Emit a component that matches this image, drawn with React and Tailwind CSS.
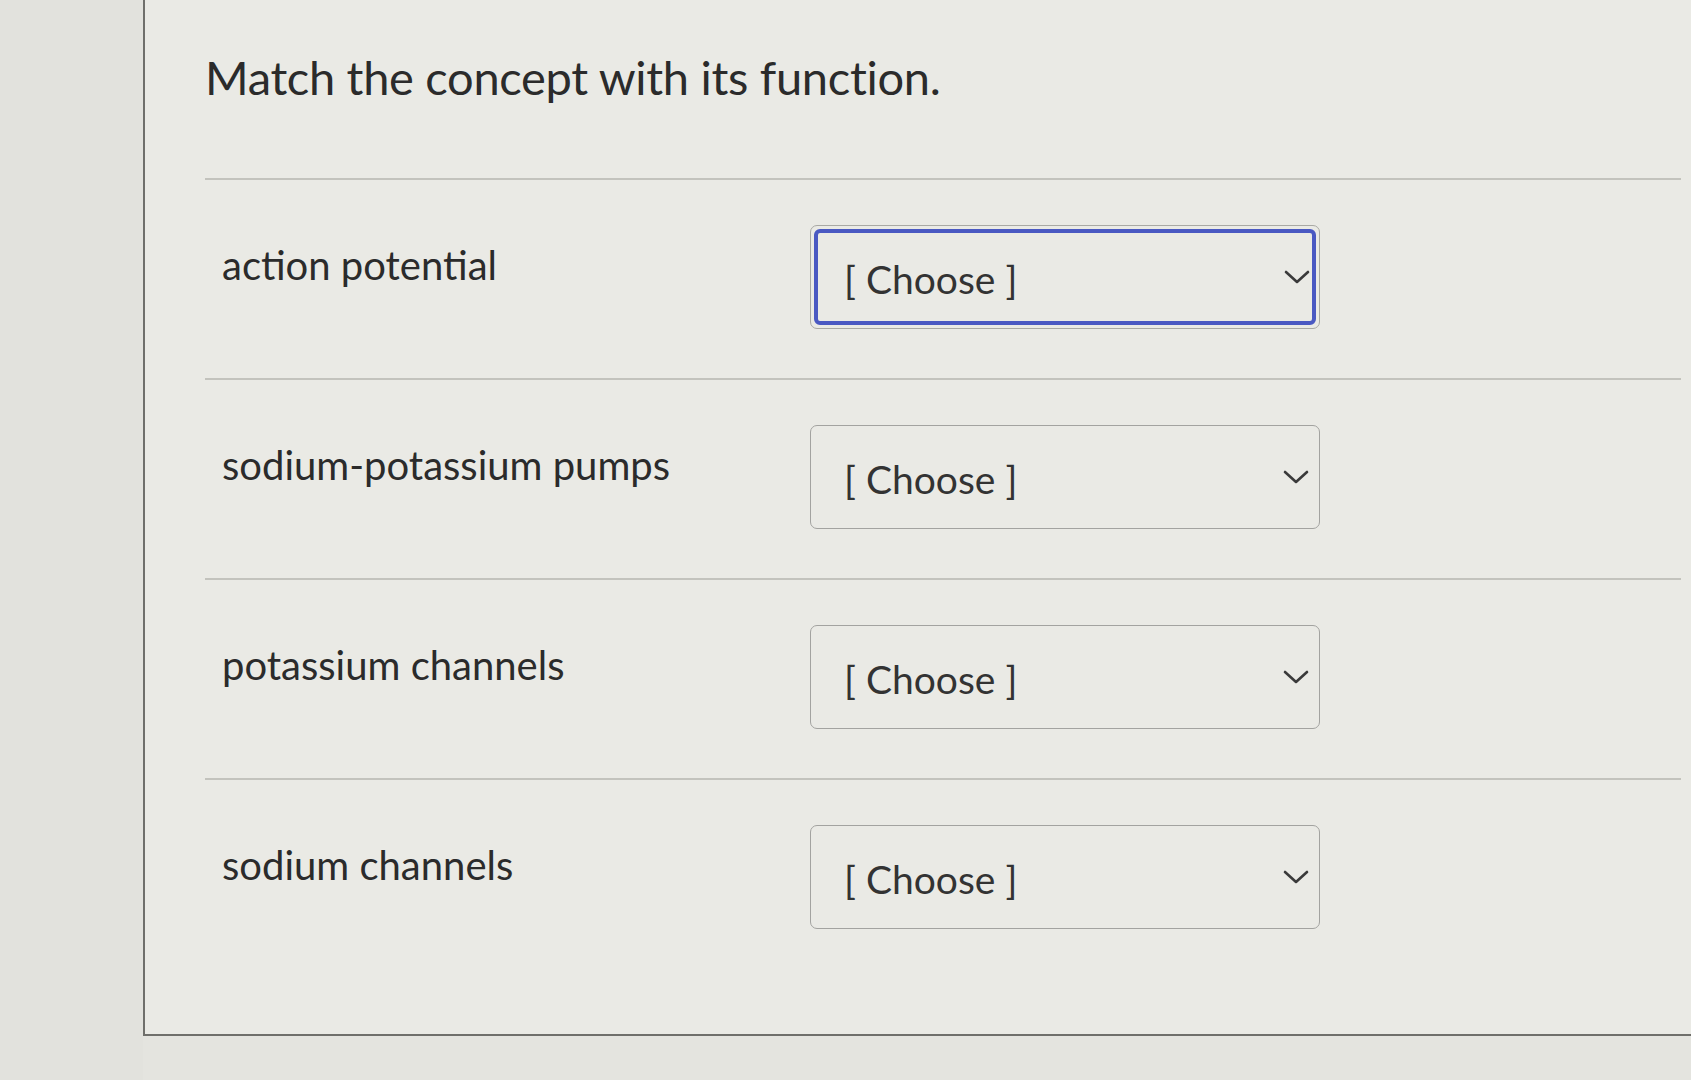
import React from 'react';

const rows = ['action potential', 'sodium-potassium pumps', 'potassium channels', 'sodium channels'];

const Chevron = () => (
  <svg width="26" height="16" viewBox="0 0 26 16" fill="none" className="shrink-0">
    <path d="M2 3 L13 13 L24 3" stroke="#3a3a3a" strokeWidth="2.6" strokeLinecap="round" strokeLinejoin="round" />
  </svg>
);

const Select = ({ focused }) => {
  if (focused) {
    return (
      <div className="w-[510px] h-[104px] rounded-[7px] border border-[#a9a9a4] p-[3px] shrink-0">
        <div className="h-full rounded-[6px] border-[4px] border-[#4a59c2] flex items-center justify-between pl-[26px] pr-[2px]">
          <span className="text-[39px] text-[#333] leading-none mt-[4px]">[ Choose ]</span>
          <Chevron />
        </div>
      </div>
    );
  }
  return (
    <div className="w-[510px] h-[104px] rounded-[7px] border-[1.5px] border-[#a3a3a0] flex items-center justify-between pl-[33px] pr-[10px] shrink-0">
      <span className="text-[39px] text-[#333] leading-none mt-[4px]">[ Choose ]</span>
      <Chevron />
    </div>
  );
};

export default function App() {
  return (
    <div className="min-h-screen bg-[#e4e4df] flex font-['Lato',sans-serif]">
      <div className="w-[143px] shrink-0 bg-[#e2e2dd]" />
      <div className="flex-1 h-[1036px] bg-[#eaeae5] border-l-2 border-b-2 border-[#6f6f6b] pl-[60px]">
        <h1 className="pt-[50px] text-[47px] leading-[55px] text-[#2b2b2b] tracking-[-0.3px]">
          Match the concept with its function.
        </h1>
        <div className="mt-[73px] mr-[10px]">
          {rows.map((label, i) => (
            <div key={label} className="h-[200px] border-t-2 border-[#c3c3bd] pt-[45px] pl-[17px] flex items-start">
              <div className="w-[588px] shrink-0 mt-[17px] text-[40px] leading-[46px] text-[#2b2b2b]">{label}</div>
              <Select focused={i === 0} />
            </div>
          ))}
        </div>
      </div>
    </div>
  );
}
